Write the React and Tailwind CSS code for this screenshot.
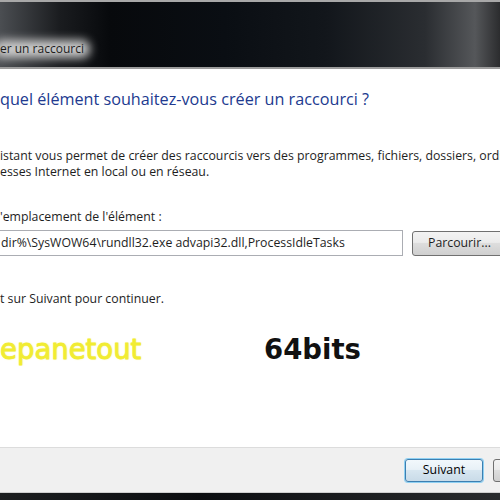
export default function App() {
  return (
    <div className="w-[500px] h-[500px] overflow-hidden flex flex-col bg-white font-['Open_Sans',sans-serif]">
      {/* Aero glass title bar */}
      <div className="h-[2px] bg-[#a8a8a8]" />
      <div className="h-[65px] flex items-end pb-[10px] bg-[linear-gradient(90deg,#4b4e52_0%,#1a1c1f_12%,#07090c_22%,#0a0e13_45%,#12161b_65%,#2a2d31_85%,#55575a_95%,#2b2c2e_100%)]">
        <span className="relative text-[12px] leading-[16px] text-[#1d1d1d]">
          {/* glass glow behind caption */}
          <span className="absolute inset-x-[-6px] inset-y-[-1px] rounded-[8px] bg-[#c9c9c9] blur-[5px]" />
          <span className="relative">er un raccourci</span>
        </span>
      </div>
      <div className="h-[2px] bg-[#9c9c9c]" />

      {/* Wizard content */}
      <main className="flex-1 flex flex-col text-[#1e1e1e] overflow-hidden whitespace-nowrap">
        <h1 className="mt-[20px] text-[16.2px] leading-[20px] text-[#213a8f]">
          quel élément souhaitez-vous créer un raccourci ?
        </h1>
        <p className="mt-[39px] text-[12.3px] leading-[16px]">
          istant vous permet de créer des raccourcis vers des programmes, fichiers, dossiers, ordinateurs
          <br />
          esses Internet en local ou en réseau.
        </p>
        <label className="mt-[29px] text-[12.3px] leading-[16px]">'emplacement de l'élément :</label>
        <div className="mt-[5px] flex items-center gap-[9px]">
          <div className="w-[403px] h-[26px] shrink-0 border border-[#abadb3] border-l-0 bg-white flex items-center text-[12.3px] pl-[1px]">
            dir%\SysWOW64\rundll32.exe advapi32.dll,ProcessIdleTasks
          </div>
          <button className="w-[100px] h-[25px] shrink-0 rounded-[3px] border border-[#707070] bg-[linear-gradient(#f3f3f3_0%,#ebebeb_45%,#dddddd_50%,#cfcfcf_100%)] text-[12.3px] text-left pl-[15px]">
            Parcourir...
          </button>
        </div>
        <p className="mt-[35px] text-[12.3px] leading-[16px]">t sur Suivant pour continuer.</p>
        <div className="mt-[26px] flex items-center font-['DejaVu_Sans',sans-serif] text-[27.5px] leading-[32px]">
          <span className="w-[264px] shrink-0 text-[#f1ec32] [-webkit-text-stroke:0.8px_#f1ec32] [text-shadow:0_0_2px_#f6f27a]">epanetout</span>
          <span className="font-bold text-[#111]">64bits</span>
        </div>
      </main>

      {/* Footer with buttons */}
      <footer className="h-[45px] border-t border-[#dcdcdc] bg-[#f0f0f0] flex items-center pl-[405px] gap-[10px]">
        <button className="w-[78px] h-[23px] shrink-0 rounded-[3px] border border-[#3c7fb1] shadow-[0_0_0_1px_#8fd0f2] bg-[linear-gradient(#f2f8fc_0%,#e8f1f7_45%,#d7e6f0_50%,#c9dbe8_100%)] text-[12.3px] leading-[16px]">
          Suivant
        </button>
        <button className="w-[78px] h-[23px] shrink-0 rounded-[3px] border border-[#707070] bg-[linear-gradient(#f3f3f3_0%,#ebebeb_45%,#dddddd_50%,#cfcfcf_100%)] text-[12.3px]">
          Annuler
        </button>
      </footer>
      <div className="h-[1px] bg-[#cfcfcf]" />
      <div className="h-[7px] bg-[linear-gradient(90deg,#1c1e20,#0b0d10_40%,#2a2c2e_100%)]" />
    </div>
  );
}
